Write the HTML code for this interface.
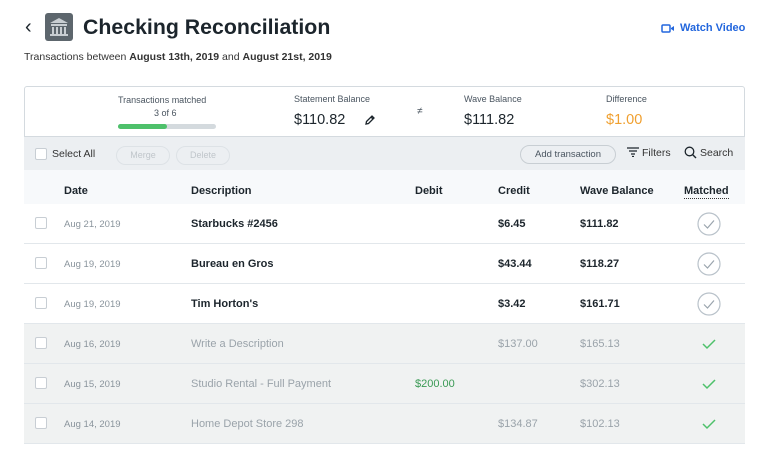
<!DOCTYPE html>
<html><head><style>
*{margin:0;padding:0;box-sizing:border-box}
body{width:768px;height:457px;background:#fff;font-family:"Liberation Sans",sans-serif;color:#1c252c;position:relative;overflow:hidden}
.a{position:absolute;white-space:nowrap}
.cb{position:absolute;width:12px;height:12px;border:1px solid #c8ced4;border-radius:2px;background:#fff}
.row{position:absolute;left:24px;width:721px;height:40px;border-bottom:1px solid #e2e7eb}
.b{font-weight:bold;font-size:11px;color:#1c252c}
.g{font-size:11px;color:#9aa3aa}
.d{font-size:9.5px;color:#8a949c}
</style></head><body>
<div class="a" style="left:25px;top:16px;font-size:20px;color:#1c252c">&#8249;</div>
<div class="a" style="left:45px;top:13px;width:28px;height:28px;background:#5d666d;border-radius:3px">
<svg width="28" height="28" viewBox="0 0 28 28"><path d="M5 10 L14 5 L23 10 Z" fill="#c9ced2"/><rect x="6" y="11" width="16" height="2" fill="#c9ced2"/><g fill="#c9ced2"><rect x="7" y="14" width="2" height="7"/><rect x="11" y="14" width="2" height="7"/><rect x="15" y="14" width="2" height="7"/><rect x="19" y="14" width="2" height="7"/></g><rect x="5" y="21" width="18" height="2" fill="#c9ced2"/></svg></div>
<div class="a" style="left:83px;top:15px;font-size:21.3px;font-weight:bold;color:#1c252c">Checking Reconciliation</div>
<div class="a" style="left:24px;top:51px;font-size:10.5px;color:#333">Transactions between <b>August 13th, 2019</b> and <b>August 21st, 2019</b></div>
<svg class="a" style="left:661px;top:23px" width="14" height="11" viewBox="0 0 14 11"><rect x="1" y="2" width="8" height="7" rx="1" fill="none" stroke="#2266dd" stroke-width="1.5"/><path d="M10 5 L13 3 V8 L10 6 Z" fill="#2266dd"/></svg>
<div class="a" style="left:680px;top:22px;font-size:11px;font-weight:bold;color:#2266dd">Watch Video</div>

<div class="a" style="left:24px;top:86px;width:721px;height:51px;border:1px solid #d4dadf;border-radius:3px 3px 0 0"></div>
<div class="a" style="left:118px;top:95px;font-size:9px;color:#4a5560">Transactions matched</div>
<div class="a" style="left:154px;top:108px;font-size:9px;color:#4a5560">3 of 6</div>
<div class="a" style="left:118px;top:124px;width:98px;height:5px;background:#d4dade;border-radius:3px"><div style="width:49px;height:5px;background:#4ec16b;border-radius:3px"></div></div>
<div class="a" style="left:294px;top:94px;font-size:9px;color:#4a5560">Statement Balance</div>
<div class="a" style="left:294px;top:112px;font-size:14.5px;color:#1c252c">$110.82</div>
<svg class="a" style="left:364px;top:114px" width="12" height="12" viewBox="0 0 12 12"><path d="M2 10 L2.5 7.5 L8 2 L10 4 L4.5 9.5 Z M7 3 L9 5" fill="none" stroke="#1c252c" stroke-width="1.3"/></svg>
<div class="a" style="left:417px;top:106px;font-size:10px;color:#4a5560">&#8800;</div>
<div class="a" style="left:464px;top:94px;font-size:9px;color:#4a5560">Wave Balance</div>
<div class="a" style="left:464px;top:112px;font-size:14.5px;color:#1c252c">$111.82</div>
<div class="a" style="left:606px;top:94px;font-size:9px;color:#4a5560">Difference</div>
<div class="a" style="left:606px;top:112px;font-size:14.5px;color:#f0a030">$1.00</div>

<div class="a" style="left:24px;top:137px;width:721px;height:33px;background:#eceff2"></div>
<div class="cb" style="left:35px;top:148px"></div>
<div class="a" style="left:52px;top:148px;font-size:10.5px;color:#333">Select All</div>
<div class="a" style="left:116px;top:146px;width:54px;height:19px;border:1px solid #dde2e6;border-radius:10px;font-size:9px;color:#c0c6cb;text-align:center;line-height:17px">Merge</div>
<div class="a" style="left:176px;top:146px;width:54px;height:19px;border:1px solid #dde2e6;border-radius:10px;font-size:9px;color:#c0c6cb;text-align:center;line-height:17px">Delete</div>
<div class="a" style="left:520px;top:145px;width:96px;height:19px;border:1px solid #c8ced3;border-radius:10px;font-size:9.5px;color:#4a5560;text-align:center;line-height:17px">Add transaction</div>
<svg class="a" style="left:627px;top:147px" width="12" height="10" viewBox="0 0 12 10"><path d="M0 1 H12 M2 4 H10 M4 7 H8 M5 9.5 H7" stroke="#1c252c" stroke-width="1.3"/></svg>
<div class="a" style="left:642px;top:147px;font-size:10.5px;color:#333">Filters</div>
<svg class="a" style="left:684px;top:146px" width="13" height="13" viewBox="0 0 13 13"><circle cx="5.5" cy="5.5" r="4.3" fill="none" stroke="#1c252c" stroke-width="1.3"/><path d="M8.5 8.5 L12 12" stroke="#1c252c" stroke-width="1.4"/></svg>
<div class="a" style="left:700px;top:147px;font-size:10.5px;color:#333">Search</div>

<div class="a" style="left:24px;top:170px;width:721px;height:34px;background:#f7f9fb"></div>
<div class="a b" style="left:64px;top:185px">Date</div>
<div class="a b" style="left:191px;top:185px">Description</div>
<div class="a b" style="left:415px;top:185px">Debit</div>
<div class="a b" style="left:498px;top:185px">Credit</div>
<div class="a b" style="left:580px;top:185px">Wave Balance</div>
<div class="a b" style="left:684px;top:185px;border-bottom:1px dotted #333;line-height:13px">Matched</div>

<div class="row" style="top:204px"></div>
<div class="row" style="top:244px"></div>
<div class="row" style="top:284px"></div>
<div class="row" style="top:324px;background:#f0f2f2"></div>
<div class="row" style="top:364px;background:#f0f2f2"></div>
<div class="row" style="top:404px;background:#f0f2f2"></div>

<div class="cb" style="left:35px;top:217px"></div><div class="a d" style="left:64px;top:219px">Aug 21, 2019</div><div class="a b" style="left:191px;top:218px">Starbucks #2456</div><div class="a b" style="left:498px;top:218px">$6.45</div><div class="a b" style="left:580px;top:218px">$111.82</div>
<div class="cb" style="left:35px;top:257px"></div><div class="a d" style="left:64px;top:259px">Aug 19, 2019</div><div class="a b" style="left:191px;top:258px">Bureau en Gros</div><div class="a b" style="left:498px;top:258px">$43.44</div><div class="a b" style="left:580px;top:258px">$118.27</div>
<div class="cb" style="left:35px;top:297px"></div><div class="a d" style="left:64px;top:299px">Aug 19, 2019</div><div class="a b" style="left:191px;top:298px">Tim Horton's</div><div class="a b" style="left:498px;top:298px">$3.42</div><div class="a b" style="left:580px;top:298px">$161.71</div>
<div class="cb" style="left:35px;top:337px"></div><div class="a d" style="left:64px;top:339px">Aug 16, 2019</div><div class="a g" style="left:191px;top:338px">Write a Description</div><div class="a g" style="left:498px;top:338px">$137.00</div><div class="a g" style="left:580px;top:338px">$165.13</div>
<div class="cb" style="left:35px;top:377px"></div><div class="a d" style="left:64px;top:379px">Aug 15, 2019</div><div class="a g" style="left:191px;top:378px">Studio Rental - Full Payment</div><div class="a g" style="left:415px;top:378px;color:#3a9a55">$200.00</div><div class="a g" style="left:580px;top:378px">$302.13</div>
<div class="cb" style="left:35px;top:417px"></div><div class="a d" style="left:64px;top:419px">Aug 14, 2019</div><div class="a g" style="left:191px;top:418px">Home Depot Store 298</div><div class="a g" style="left:498px;top:418px">$134.87</div><div class="a g" style="left:580px;top:418px">$102.13</div>

<svg class="a" style="left:697px;top:212px" width="24" height="24" viewBox="0 0 24 24"><circle cx="12" cy="12" r="11" fill="#fff" stroke="#b9c2ca" stroke-width="1.2"/><path d="M7 12.5 L10.5 16 L17 8.5" fill="none" stroke="#9aa4ad" stroke-width="1.2"/></svg>
<svg class="a" style="left:697px;top:252px" width="24" height="24" viewBox="0 0 24 24"><circle cx="12" cy="12" r="11" fill="#fff" stroke="#b9c2ca" stroke-width="1.2"/><path d="M7 12.5 L10.5 16 L17 8.5" fill="none" stroke="#9aa4ad" stroke-width="1.2"/></svg>
<svg class="a" style="left:697px;top:292px" width="24" height="24" viewBox="0 0 24 24"><circle cx="12" cy="12" r="11" fill="#fff" stroke="#b9c2ca" stroke-width="1.2"/><path d="M7 12.5 L10.5 16 L17 8.5" fill="none" stroke="#9aa4ad" stroke-width="1.2"/></svg>
<svg class="a" style="left:702px;top:338px" width="14" height="12" viewBox="0 0 14 12"><path d="M1 6 L5 10 L13 2" fill="none" stroke="#4ec16b" stroke-width="1.5"/></svg>
<svg class="a" style="left:702px;top:378px" width="14" height="12" viewBox="0 0 14 12"><path d="M1 6 L5 10 L13 2" fill="none" stroke="#4ec16b" stroke-width="1.5"/></svg>
<svg class="a" style="left:702px;top:418px" width="14" height="12" viewBox="0 0 14 12"><path d="M1 6 L5 10 L13 2" fill="none" stroke="#4ec16b" stroke-width="1.5"/></svg>
</body></html>
